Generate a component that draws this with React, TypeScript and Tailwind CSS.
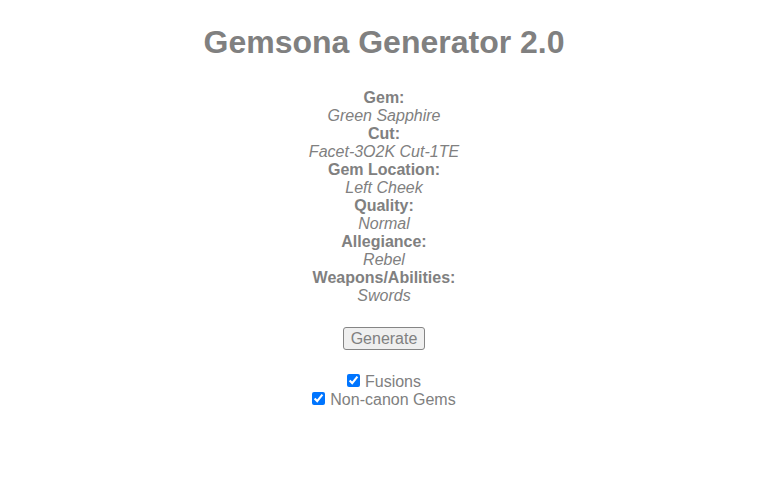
import React, { useState } from 'react';

const traits = [
  { label: 'Gem:', value: 'Green Sapphire' },
  { label: 'Cut:', value: 'Facet-3O2K Cut-1TE' },
  { label: 'Gem Location:', value: 'Left Cheek' },
  { label: 'Quality:', value: 'Normal' },
  { label: 'Allegiance:', value: 'Rebel' },
  { label: 'Weapons/Abilities:', value: 'Swords' },
];

export default function App() {
  const [fusions, setFusions] = useState(true);
  const [nonCanon, setNonCanon] = useState(true);

  return (
    <div className="w-[768px] h-[480px] bg-white text-[#808080] font-['Liberation_Sans',Arial,sans-serif] text-center">
      <h1 className="pt-[24px] text-[32px] leading-[37px] font-bold">Gemsona Generator 2.0</h1>

      <div className="mt-[28px] flex flex-col text-[16px] leading-[18px]">
        {traits.map((t) => (
          <React.Fragment key={t.label}>
            <div className="font-bold">{t.label}</div>
            <div className="italic">{t.value}</div>
          </React.Fragment>
        ))}
      </div>

      <div className="mt-[22px] flex justify-center">
        <button className="h-[23px] px-[7px] text-[16px] leading-[18px] text-[#808080] bg-[#efefef] border border-[#858585] rounded-[3px]">
          Generate
        </button>
      </div>

      <div className="mt-[23px] flex flex-col items-center text-[16px] leading-[18px]">
        <label className="flex items-center gap-[5px]">
          <input
            type="checkbox"
            checked={fusions}
            onChange={(e) => setFusions(e.target.checked)}
            className="w-[13px] h-[13px] mb-[4px] accent-[#0075ff]"
          />
          Fusions
        </label>
        <label className="flex items-center gap-[5px]">
          <input
            type="checkbox"
            checked={nonCanon}
            onChange={(e) => setNonCanon(e.target.checked)}
            className="w-[13px] h-[13px] mb-[4px] accent-[#0075ff]"
          />
          Non-canon Gems
        </label>
      </div>
    </div>
  );
}
